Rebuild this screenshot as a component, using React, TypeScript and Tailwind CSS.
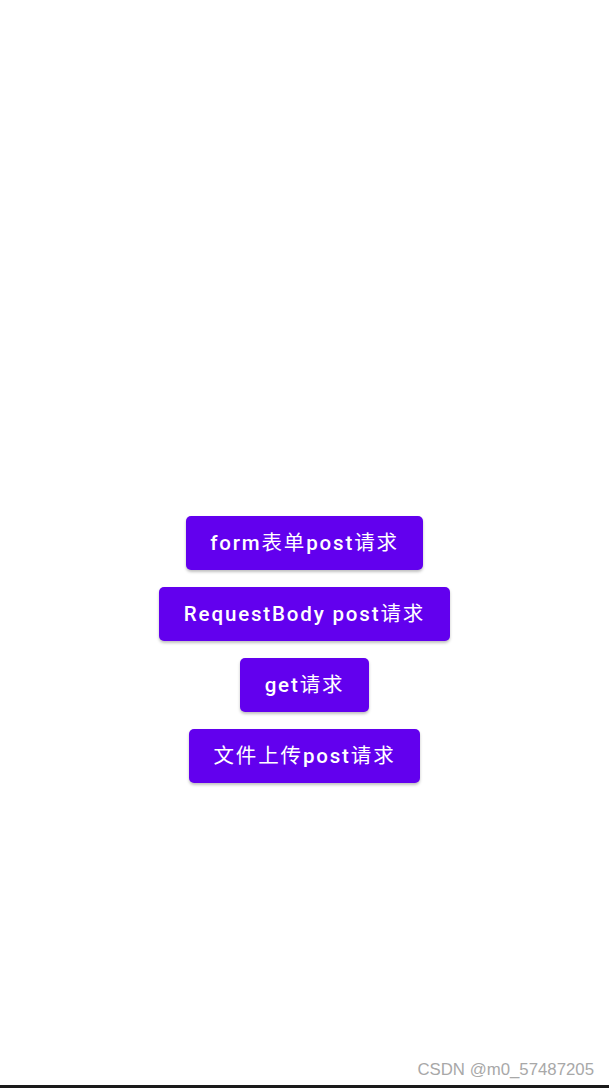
import React from "react";

const buttons = ["form表单post请求", "RequestBody post请求", "get请求", "文件上传post请求"];

// CJK glyphs render at regular weight in the reference, latin at medium
function Label({ text }: { text: string }) {
  const parts = text.match(/[\u4e00-\u9fff]+|[^\u4e00-\u9fff]+/g) || [];
  return (
    <>
      {parts.map((p, i) =>
        /[\u4e00-\u9fff]/.test(p) ? (
          <span key={i} className="font-normal">
            {p}
          </span>
        ) : (
          <span key={i}>{p}</span>
        )
      )}
    </>
  );
}

export default function App() {
  return (
    <div
      className="h-[1088px] w-full bg-white flex flex-col overflow-hidden"
      style={{ fontFamily: "Roboto, 'Noto Sans CJK SC', sans-serif" }}
    >
      {/* Button stack */}
      <main className="flex-1 flex flex-col items-center gap-[17px] pt-[516px]">
        {buttons.map((label) => (
          <button
            key={label}
            className="h-[54px] px-[24.5px] rounded-[5px] bg-[#6200EE] text-white text-[20.5px] font-medium tracking-[0.09em] shadow-[0_2px_3px_rgba(0,0,0,0.25)] whitespace-nowrap"
          >
            <Label text={label} />
          </button>
        ))}
      </main>

      {/* Watermark + bottom edge */}
      <footer className="flex justify-end pr-[15px] pb-[5px] border-b-[3px] border-[#1a1a1a]">
        <span
          className="text-[16.8px] leading-[20px] text-[#a8a8a8]"
          style={{ fontFamily: "'Liberation Sans', Arial, sans-serif" }}
        >
          CSDN @m0_57487205
        </span>
      </footer>
    </div>
  );
}
